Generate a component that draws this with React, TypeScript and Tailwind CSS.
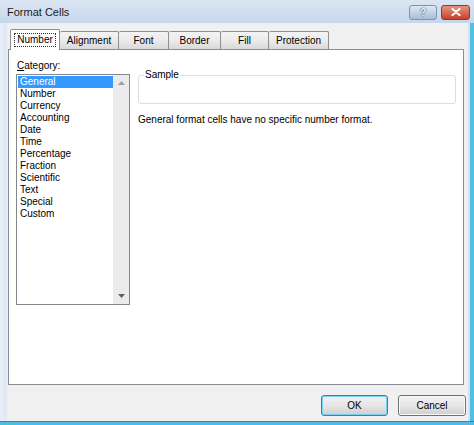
import React from 'react'

const font = { fontFamily: '"Liberation Sans", Arial, sans-serif' }

const tabs = ['Number', 'Alignment', 'Font', 'Border', 'Fill', 'Protection']
const tabWidths = ['w-[50px]', 'w-[59px]', 'w-[50px]', 'w-[52px]', 'w-[48px]', 'w-[60px]']

const categories = [
  'General',
  'Number',
  'Currency',
  'Accounting',
  'Date',
  'Time',
  'Percentage',
  'Fraction',
  'Scientific',
  'Text',
  'Special',
  'Custom',
]

function TitleBar() {
  return (
    <div className="h-[23px] flex items-center bg-gradient-to-b from-[#dbe6f3] to-[#c6d7ec] pl-[7px] pr-[4px]">
      <span className="text-[11px] text-[#1b1b1b] flex-1 mt-[2px]">Format Cells</span>
      <div className="flex gap-[4px] mt-[1px]">
        <div className="w-[28px] h-[15px] rounded-[3px] border border-[#7f93ad] bg-gradient-to-b from-[#dfe8f3] to-[#a9bdd6] flex items-center justify-center">
          <span className="text-[11px] font-bold text-[#f4f7fb] leading-none [text-shadow:0_0_1px_#2c3e57,0_0_1px_#2c3e57]">?</span>
        </div>
        <div className="w-[29px] h-[15px] rounded-[3px] border border-[#8e3a2f] bg-gradient-to-b from-[#e7937f] to-[#c3412e] flex items-center justify-center">
          <svg width="10" height="8" viewBox="0 0 10 8">
            <path d="M1.5 1 L8.5 7 M8.5 1 L1.5 7" stroke="#fff" strokeWidth="2.2" strokeLinecap="round" />
          </svg>
        </div>
      </div>
    </div>
  )
}

function Tabs() {
  return (
    <div className="flex items-end h-[26px] pl-[3px]">
      {tabs.map((t, i) =>
        i === 0 ? (
          <div
            key={t}
            className={`${tabWidths[i]} h-[21px] -mb-px z-10 bg-white border border-[#8e8f8f] border-b-0 rounded-t-[2px] flex items-center justify-center`}
          >
            <span className="px-[2px] leading-[12px] text-[10px] border border-dotted border-[#333]">{t}</span>
          </div>
        ) : (
          <div
            key={t}
            className={`${tabWidths[i]} h-[18px] bg-gradient-to-b from-[#f3f3f3] via-[#ebebeb] to-[#d9d9d9] border border-[#8e8f8f] border-b-0 border-l-0 rounded-t-[2px] flex items-center justify-center text-[10px]`}
          >
            {t}
          </div>
        ),
      )}
    </div>
  )
}

function CategoryList() {
  return (
    <div className="flex flex-col">
      <div className="text-[10px] leading-[12px] ml-[1px] mb-[2px]">
        <span className="underline">C</span>ategory:
      </div>
      <div className="w-[114px] h-[231px] border border-[#828790] bg-white flex">
        <div className="flex-1 pt-[1px] pl-[1px]">
          {categories.map((c, i) => (
            <div
              key={c}
              className={`h-[12px] leading-[12px] text-[10px] pl-[2px] ${
                i === 0 ? 'bg-[#3399ff] text-white' : 'text-black'
              }`}
            >
              {c}
            </div>
          ))}
        </div>
        <div className="w-[16px] bg-[#ebebeb] flex flex-col justify-between items-center py-[6px]">
          <svg width="7" height="4" viewBox="0 0 7 4">
            <path d="M0 4 L3.5 0 L7 4 Z" fill="#a0a0a0" />
          </svg>
          <svg width="7" height="4" viewBox="0 0 7 4">
            <path d="M0 0 L3.5 4 L7 0 Z" fill="#606060" />
          </svg>
        </div>
      </div>
    </div>
  )
}

function SamplePanel() {
  return (
    <div className="flex-1 flex flex-col pt-[15px]">
      <div className="relative h-[29px] border border-[#d5dfe5] rounded-[3px]">
        <span className="absolute left-[5px] -top-[7px] bg-white px-[1px] text-[10px] leading-[12px]">Sample</span>
      </div>
      <div className="text-[10px] leading-[12px] mt-[10px]">General format cells have no specific number format.</div>
    </div>
  )
}

function Button({ label, primary }: { label: string; primary?: boolean }) {
  return (
    <div
      className={`h-[21px] rounded-[3px] border flex items-center justify-center text-[10px] bg-gradient-to-b from-[#f2f2f2] via-[#e6e6e6] to-[#cfcfcf] ${
        primary
          ? 'w-[67px] border-[#3c7fb1] shadow-[inset_0_0_0_1px_#7ed0f0]'
          : 'w-[68px] border-[#707070] shadow-[inset_0_0_0_1px_#fafafa]'
      }`}
    >
      {label}
    </div>
  )
}

export default function App() {
  return (
    <div style={font} className="w-[474px] h-[425px] flex flex-col bg-[#dfe8f4] text-black overflow-hidden">
      <TitleBar />
      <div className="flex-1 flex">
        <div className="w-[7px] bg-gradient-to-r from-[#e9eff8] to-[#dfe8f4]" />
        <div className="flex-1 flex flex-col bg-[#f0f0f0]">
          <Tabs />
          <div className="ml-[1px] w-[456px] h-[336px] bg-white border border-[#898c95] flex gap-[8px] pl-[7px] pr-[7px] pt-[10px]">
            <CategoryList />
            <SamplePanel />
          </div>
          <div className="flex justify-end gap-[10px] pr-[2px] pt-[10px]">
            <Button label="OK" primary />
            <Button label="Cancel" />
          </div>
        </div>
        <div className="w-[6px] flex">
          <div className="w-[2px] bg-[#cfe3f2]" />
          <div className="flex-1 bg-[#53bde6]" />
        </div>
      </div>
      <div className="h-px bg-[#5a7a94]" />
      <div className="h-[3px] bg-[#4fbce6]" />
    </div>
  )
}
